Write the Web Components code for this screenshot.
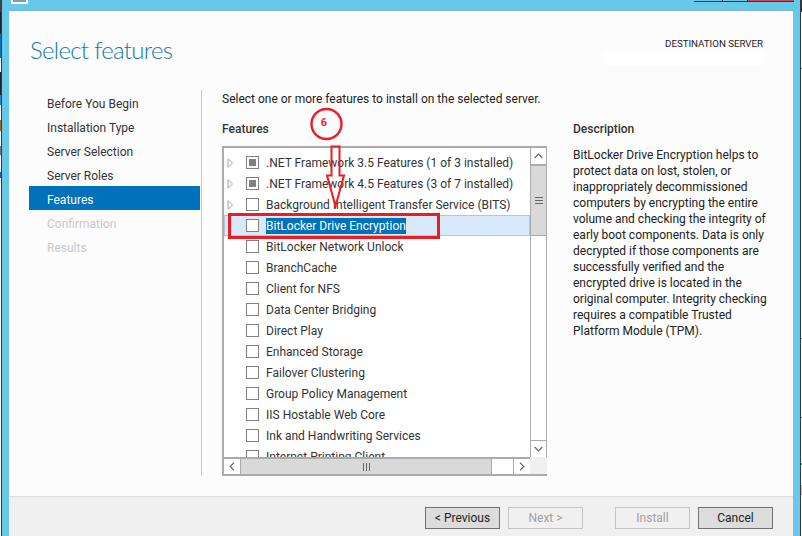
<!DOCTYPE html>
<html>
<head>
<meta charset="utf-8">
<title>Add Roles and Features Wizard</title>
<style>
html,body{margin:0;padding:0;width:802px;height:536px;overflow:hidden;background:#333;}
body{font-family:Roboto,"Noto Sans",sans-serif;font-size:12px;}
</style>
</head>
<body>
<wizard-window heading="Add Roles and Features Wizard">
  <wizard-header slot="header" title-text="Select features"></wizard-header>
  <wizard-nav slot="nav">
    <nav-item>Before You Begin</nav-item>
    <nav-item>Installation Type</nav-item>
    <nav-item>Server Selection</nav-item>
    <nav-item>Server Roles</nav-item>
    <nav-item active>Features</nav-item>
    <nav-item disabled>Confirmation</nav-item>
    <nav-item disabled>Results</nav-item>
  </wizard-nav>
  <features-page slot="main">
    <feature-row expandable state="mixed">.NET Framework 3.5 Features (1 of 3 installed)</feature-row>
    <feature-row expandable state="mixed">.NET Framework 4.5 Features (3 of 7 installed)</feature-row>
    <feature-row expandable>Background Intelligent Transfer Service (BITS)</feature-row>
    <feature-row selected>BitLocker Drive Encryption</feature-row>
    <feature-row>BitLocker Network Unlock</feature-row>
    <feature-row>BranchCache</feature-row>
    <feature-row>Client for NFS</feature-row>
    <feature-row>Data Center Bridging</feature-row>
    <feature-row>Direct Play</feature-row>
    <feature-row>Enhanced Storage</feature-row>
    <feature-row>Failover Clustering</feature-row>
    <feature-row>Group Policy Management</feature-row>
    <feature-row>IIS Hostable Web Core</feature-row>
    <feature-row>Ink and Handwriting Services</feature-row>
    <feature-row>Internet Printing Client</feature-row>
  </features-page>
  <wizard-button slot="footer">&lt; Previous</wizard-button>
  <wizard-button slot="footer" disabled>Next &gt;</wizard-button>
  <wizard-button slot="footer" disabled gap>Install</wizard-button>
  <wizard-button slot="footer" primary>Cancel</wizard-button>
</wizard-window>
<step-callout></step-callout>

<script>
// small helper so each component just declares its html once
function tpl(html){
  var t = document.createElement("template");
  t.innerHTML = html;
  return t;
}

class Shadowed extends HTMLElement{
  constructor(){
    super();
    this.attachShadow({mode:"open"}).appendChild(this.constructor.template.content.cloneNode(true));
  }
}

class WizardWindow extends Shadowed{
  static template = tpl(`
  <style>
  :host{display:flex;width:802px;height:536px;position:relative;}
  .strip{width:1px;flex:none;}
  .left{background:linear-gradient(#444 0 12px,#222 12px 34px,#0a72b8 34px 58px,#fff 58px 72px,#222 72px 95px,#2f86d0 95px 105px,#fff 105px 120px,#a5681e 120px 131px,#fff 131px 146px,#777 146px 155px,#fff 155px 172px,#335a9c 172px 178px,#fff 178px 190px,#fff 100%);}
  .right{background:linear-gradient(#333 0 12px,#fff 12px 68px,#555 68px 69px,#fff 69px 338px,#555 338px 339px,#fff 339px 417px,#555 417px 418px,#fff 418px 463px,#2a2 463px 465px,#fff 465px 485px,#e9b878 485px 495px,#fff 495px);}
  .frame{width:800px;flex:none;display:flex;flex-direction:column;border-left:1px solid #3a3a3a;border-right:1px solid #3a3a3a;box-sizing:border-box;background:#66c9ea;padding:0 7px;}
  .bar{height:10px;flex:none;margin:0 -7px;display:flex;justify-content:center;overflow:hidden;position:relative;}
  .bar span{font:12px/16px Roboto,sans-serif;color:#111;margin-top:-13px;height:16px;white-space:nowrap;}
  .sysicon{position:absolute;left:9px;top:-6px;width:13px;height:6px;border:2px solid #fff;background:#7d9cb8;}
  .sys{position:absolute;left:692px;top:0;height:1px;width:100px;display:flex;border-bottom:1px solid #2b3a44;}
  .sys i{display:block;height:1px;border-right:1px solid #2b3a44;width:28px;}
  .sys i.c{width:46px;background:#c75050;border:0;}
  .client{flex:1;min-height:0;display:flex;flex-direction:column;background:#fcfcfc;border-top:1px solid #7fb4c9;}
  .head{height:79px;flex:none;}
  .body{flex:1;min-height:0;display:flex;padding-left:20px;}
  .rule{width:1px;background:#c8c8c8;margin:0 20px 20px 1px;flex:none;}
  .foot{height:40px;box-sizing:border-box;flex:none;background:#f0f0f0;border-top:1px solid #dcdcdc;display:flex;align-items:flex-start;justify-content:flex-end;padding:10px 20px 0 0;}
  </style>
  <div class="strip left"></div>
  <div class="frame">
    <div class="bar"><div class="sysicon"></div><span id="cap"></span><div class="sys"><i></i><i style="width:24px"></i><i class="c"></i></div></div>
    <div class="client">
      <div class="head"><slot name="header"></slot></div>
      <div class="body"><slot name="nav"></slot><div class="rule"></div><slot name="main"></slot></div>
      <div class="foot"><slot name="footer"></slot></div>
    </div>
  </div>
  <div class="strip right"></div>
  `);
  connectedCallback(){
    this.shadowRoot.getElementById("cap").textContent = this.getAttribute("heading");
  }
}

class WizardHeader extends Shadowed{
  static template = tpl(`
  <style>
  :host{display:flex;justify-content:space-between;height:79px;padding:0 30px 0 21px;box-sizing:border-box;}
  h1{margin:22px 0 0;font:300 24px/34px Lato,sans-serif;color:#0f7aa5;letter-spacing:-.7px;}
  .dest{margin-top:26px;width:158px;font:9.7px/14px Roboto,sans-serif;color:#1c1c1c;text-align:right;}
  .name{height:13px;background:#fff;margin-top:1px;}
  </style>
  <h1 id="t"></h1>
  <div class="dest">DESTINATION SERVER<div class="name"></div></div>
  `);
  connectedCallback(){
    this.shadowRoot.getElementById("t").textContent = this.getAttribute("title-text");
  }
}

class WizardNav extends Shadowed{
  static template = tpl(`
  <style>:host{display:block;width:171px;flex:none;}</style>
  <slot></slot>
  `);
}

class NavItem extends Shadowed{
  static template = tpl(`
  <style>
  :host{display:block;height:24px;padding-left:18px;font:12px/28px Roboto,sans-serif;color:#333;}
  :host([active]){background:#0072bc;color:#fff;}
  :host([disabled]){color:#c8c8c8;}
  </style>
  <slot></slot>
  `);
}

class FeaturesPage extends Shadowed{
  static template = tpl(`
  <style>
  :host{display:flex;flex:none;width:551px;font:12px/16px Roboto,sans-serif;color:#222;}
  .col{width:325px;flex:none;}
  p{margin:0;}
  .intro{height:16px;margin-top:1px;white-space:nowrap;}
  .lab{margin-top:14px;height:16px;font-weight:500;color:#333;}
  .box{margin-top:9px;height:330px;box-sizing:border-box;border:2px solid #ababab;border-right-width:1px;display:grid;grid-template-columns:306px 17px;grid-template-rows:1fr 17px;background:#fff;}
  .view{overflow:hidden;padding-top:4px;min-height:0;}
  .desc{margin-left:26px;width:200px;}
  .desc .lab{margin-top:31px;margin-bottom:10px;}
  .corner{background:#f0f0f0;}
  .txt{white-space:nowrap;}
  </style>
  <div class="col">
    <p class="intro">Select one or more features to install on the selected server.</p>
    <p class="lab">Features</p>
    <div class="box">
      <div class="view"><slot></slot></div>
      <list-vscroll></list-vscroll>
      <list-hscroll></list-hscroll>
      <div class="corner"></div>
    </div>
  </div>
  <div class="desc">
    <p class="lab">Description</p>
    <p class="txt">BitLocker Drive Encryption helps to<br>protect data on lost, stolen, or<br>inappropriately decommissioned<br>computers by encrypting the entire<br>volume and checking the integrity of<br>early boot components. Data is only<br>decrypted if those components are<br>successfully verified and the<br>encrypted drive is located in the<br>original computer. Integrity checking<br>requires a compatible Trusted<br>Platform Module (TPM).</p>
  </div>
  `);
}

class FeatureRow extends Shadowed{
  static template = tpl(`
  <style>
  :host{display:flex;align-items:center;height:21px;box-sizing:border-box;font:12px/16px Roboto,sans-serif;color:#333;white-space:nowrap;}
  :host([selected]){background:#d9e9fc;box-shadow:inset 0 0 0 1px #a9c8ea;}
  .exp{width:22px;flex:none;display:flex;padding-left:3px;box-sizing:border-box;}
  .exp svg{visibility:hidden;}
  :host([expandable]) .exp svg{visibility:visible;}
  .chk{width:13px;height:13px;flex:none;box-sizing:border-box;border:1px solid #808080;background:#fff;padding:2px;margin-right:7px;}
  :host([state=mixed]) .chk i{display:block;width:7px;height:7px;background:#808080;}
  .txt{line-height:16px;}
  :host([selected]) .txt{background:#0072bc;color:#fff;}
  </style>
  <div class="exp"><svg width="7" height="10" viewBox="0 0 7 10"><path d="M1 .8 5.6 5 1 9.2Z" fill="#fff" stroke="#a6a6a6"/></svg></div>
  <div class="chk"><i></i></div>
  <span class="txt"><slot></slot></span>
  `);
}

class ListVscroll extends Shadowed{
  static template = tpl(`
  <style>
  :host{display:flex;flex-direction:column;grid-row:1;grid-column:2;min-height:0;border-left:1px solid #ababab;border-right:1px solid #ababab;box-sizing:border-box;background:#fff;}
  .btn{height:16px;flex:none;display:flex;align-items:center;justify-content:center;background:#fff;}
  .thumb{height:72px;flex:none;background:#d9d9d9;border:1px solid #ababab;border-width:2px 0 1px;display:flex;align-items:center;justify-content:center;box-sizing:border-box;}
  .sp{flex:1;}
  .low{border-top:1px solid #ababab;}
  </style>
  <div class="btn"><svg width="9" height="6" viewBox="0 0 9 6"><path d="M.7 5 4.5 1.2 8.3 5" fill="none" stroke="#666" stroke-width="1.2"/></svg></div>
  <div class="thumb"><svg width="8" height="7" viewBox="0 0 8 7"><path d="M0 .5H8M0 3.5H8M0 6.5H8" stroke="#666"/></svg></div>
  <div class="sp"></div>
  <div class="btn low"><svg width="9" height="6" viewBox="0 0 9 6"><path d="M.7 1 4.5 4.8 8.3 1" fill="none" stroke="#666" stroke-width="1.2"/></svg></div>
  `);
}

class ListHscroll extends Shadowed{
  static template = tpl(`
  <style>
  :host{display:flex;grid-row:2;grid-column:1;border-top:2px solid #ababab;box-sizing:border-box;background:#fff;}
  .btn{width:16px;flex:none;display:flex;align-items:center;justify-content:center;background:#fff;}
  .thumb{width:252px;flex:none;background:#d9d9d9;border:1px solid #ababab;border-width:0 1px;display:flex;align-items:center;justify-content:center;box-sizing:border-box;}
  .sp{flex:1;}
  .r{border-left:1px solid #ababab;}
  </style>
  <div class="btn"><svg width="6" height="9" viewBox="0 0 6 9"><path d="M5 .7 1.2 4.5 5 8.3" fill="none" stroke="#666" stroke-width="1.2"/></svg></div>
  <div class="thumb"><svg width="7" height="8" viewBox="0 0 7 8"><path d="M.5 0V8M3.5 0V8M6.5 0V8" stroke="#666"/></svg></div>
  <div class="sp"></div>
  <div class="btn r"><svg width="6" height="9" viewBox="0 0 6 9"><path d="M1 .7 4.8 4.5 1 8.3" fill="none" stroke="#666" stroke-width="1.2"/></svg></div>
  `);
}

class WizardButton extends Shadowed{
  static template = tpl(`
  <style>
  :host{display:block;width:75px;height:22px;box-sizing:border-box;margin-left:8px;border:1px solid #707070;background:#dcdcdc;color:#222;font:12px/21px Roboto,sans-serif;text-align:center;}
  :host([disabled]){border-color:#c4c4c4;background:#f0f0f0;color:#a0a0a0;}
  :host([gap]){margin-left:32px;}
  </style>
  <slot></slot>
  `);
}

// the red markup drawn on top of the screenshot
class StepCallout extends Shadowed{
  static template = tpl(`
  <style>
  :host{display:block;position:absolute;left:0;top:0;width:802px;height:536px;pointer-events:none;}
  svg{position:absolute;left:0;top:0;}
  .n{position:absolute;left:309px;top:108px;width:30px;height:30px;font:bold 11px/30px Roboto,sans-serif;color:#ed1c24;text-align:center;}
  </style>
  <svg width="802" height="536" viewBox="0 0 802 536" fill="none" stroke="#ed1c24">
    <circle cx="326.5" cy="124" r="15" stroke-width="2.4"/>
    <path d="M331.5 146.5H339.5V175.5H344L335.5 206 327 175.5H331.5Z" stroke-width="2"/>
    <rect x="229.5" y="214.5" width="209" height="23" stroke-width="3"/>
  </svg>
  <div class="n">6</div>
  `);
}

customElements.define("wizard-window",WizardWindow);
customElements.define("wizard-header",WizardHeader);
customElements.define("wizard-nav",WizardNav);
customElements.define("nav-item",NavItem);
customElements.define("features-page",FeaturesPage);
customElements.define("feature-row",FeatureRow);
customElements.define("list-vscroll",ListVscroll);
customElements.define("list-hscroll",ListHscroll);
customElements.define("wizard-button",WizardButton);
customElements.define("step-callout",StepCallout);
</script>
</body>
</html>
